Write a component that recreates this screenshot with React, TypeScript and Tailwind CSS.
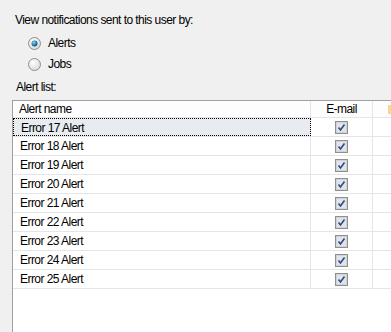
import React from 'react'

const ALERTS = [17, 18, 19, 20, 21, 22, 23, 24, 25]

function Radio({ checked }: { checked?: boolean }) {
  return (
    <svg width="13" height="13" viewBox="0 0 13 13">
      <defs>
        <radialGradient id="rgb" cx="0.4" cy="0.35" r="0.7">
          <stop offset="0" stopColor="#ffffff" />
          <stop offset="1" stopColor="#d6d6d6" />
        </radialGradient>
        <radialGradient id="dot" cx="0.4" cy="0.35" r="0.7">
          <stop offset="0" stopColor="#8fd9ec" />
          <stop offset="0.6" stopColor="#1d7ea8" />
          <stop offset="1" stopColor="#0d4f6f" />
        </radialGradient>
      </defs>
      <circle cx="6.5" cy="6.5" r="6" fill="url(#rgb)" stroke="#8e8f8f" strokeWidth="1" />
      {checked && <circle cx="6.5" cy="6.5" r="3" fill="url(#dot)" />}
    </svg>
  )
}

function Check() {
  return (
    <svg width="13" height="13" viewBox="0 0 13 13">
      <rect x="0.5" y="0.5" width="12" height="12" fill="#f4f4f4" stroke="#8e8f8f" />
      <rect x="1.5" y="1.5" width="10" height="10" fill="#e2e4e8" stroke="#d0d2d6" />
      <path d="M3.5 6.5 L5.5 9 L9.5 3.5" fill="none" stroke="#2a4a8a" strokeWidth="1.6" />
    </svg>
  )
}

export default function App() {
  return (
    <div
      className="w-[391px] h-[332px] bg-[#f0f0f0] overflow-hidden text-[12px] tracking-[-0.55px] text-black"
      style={{ fontFamily: '"Liberation Sans", Arial, sans-serif' }}
    >
      <div className="pl-[15px] pt-[12px] leading-[16px]">View notifications sent to this user by:</div>
      <div className="pl-[28px] pt-[9px] flex flex-col gap-[8px]">
        <div className="flex items-center gap-[7px] leading-[13px]">
          <Radio checked /> <span>Alerts</span>
        </div>
        <div className="flex items-center gap-[7px] leading-[13px]">
          <Radio /> <span>Jobs</span>
        </div>
      </div>
      <div className="pl-[16px] pt-[8px] leading-[16px]">Alert list:</div>
      <div className="ml-[12px] mt-[5px] h-[240px] border-l border-t border-[#a0a0a0] bg-white">
        <div className="flex h-[17px] border-b border-[#e5e5e5] bg-[#fdfdfd] leading-[16px]">
          <div className="w-[298px] pl-[6px] border-r border-[#e5e5e5]">Alert name</div>
          <div className="w-[62px] text-center border-r border-[#e5e5e5]">E-mail</div>
          <div className="flex-1 pl-[15px]"><div className="w-[3px] h-[9px] mt-[4px] bg-[#f8d98c]" /></div>
        </div>
        {ALERTS.map((n, i) => (
          <div key={n} className="flex h-[19px] border-b border-[#e5e5e5] leading-[18px]">
            <div className={`w-[298px] pl-[7px] ${i === 0 ? 'bg-[#e8ecf1] border border-dotted border-black' : 'border-r border-[#e5e5e5]'}`}>
              Error {n} Alert
            </div>
            <div className="w-[62px] flex items-center justify-center border-r border-[#e5e5e5]">
              <Check />
            </div>
            <div className="flex-1" />
          </div>
        ))}
      </div>
    </div>
  )
}
